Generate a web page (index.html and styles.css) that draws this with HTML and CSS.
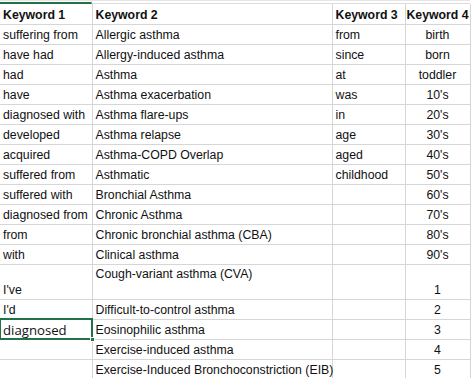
FILE: index.html
```html
<html>

<head>
    <title>Keywords</title>
    <link rel="stylesheet" href="styles.css">
</head>

<body>
    <div class="colhead">
        <div class="colhead_sel"></div>
        <div class="colhead_rest"></div>
    </div>
    <table class="sheet">
        <colgroup>
            <col class="c1">
            <col class="c2">
            <col class="c3">
            <col class="c4">
        </colgroup>
        <tr class="head">
            <td>Keyword 1</td>
            <td>Keyword 2</td>
            <td>Keyword 3</td>
            <td class="mid">Keyword 4</td>
        </tr>
        <tr><td>suffering from</td><td>Allergic asthma</td><td>from</td><td class="mid">birth</td></tr>
        <tr><td>have had</td><td>Allergy-induced asthma</td><td>since</td><td class="mid">born</td></tr>
        <tr><td>had</td><td>Asthma</td><td>at</td><td class="mid">toddler</td></tr>
        <tr><td>have</td><td>Asthma exacerbation</td><td>was</td><td class="mid">10's</td></tr>
        <tr><td>diagnosed with</td><td>Asthma flare-ups</td><td>in</td><td class="mid">20's</td></tr>
        <tr><td>developed</td><td>Asthma relapse</td><td>age</td><td class="mid">30's</td></tr>
        <tr><td>acquired</td><td>Asthma-COPD Overlap</td><td>aged</td><td class="mid">40's</td></tr>
        <tr><td>suffered from</td><td>Asthmatic</td><td>childhood</td><td class="mid">50's</td></tr>
        <tr><td>suffered with</td><td>Bronchial Asthma</td><td></td><td class="mid">60's</td></tr>
        <tr><td>diagnosed from</td><td>Chronic Asthma</td><td></td><td class="mid">70's</td></tr>
        <tr><td>from</td><td>Chronic bronchial asthma (CBA)</td><td></td><td class="mid">80's</td></tr>
        <tr><td>with</td><td>Clinical asthma</td><td></td><td class="mid">90's</td></tr>
        <tr class="tall"><td>I've</td><td class="top">Cough-variant asthma (CVA)</td><td></td><td class="mid">1</td></tr>
        <tr><td>I'd</td><td>Difficult-to-control asthma</td><td></td><td class="mid">2</td></tr>
        <tr><td class="selected">diagnosed<span class="handle"></span></td><td>Eosinophilic asthma</td><td></td><td class="mid">3</td></tr>
        <tr><td></td><td>Exercise-induced asthma</td><td></td><td class="mid">4</td></tr>
        <tr><td></td><td>Exercise-Induced Bronchoconstriction (EIB)</td><td></td><td class="mid">5</td></tr>
    </table>
</body>

</html>
```

FILE: styles.css
```css
body {
    margin: 0;
    background-color: #ffffff;
    font-family: "Liberation Sans", Arial, sans-serif;
    color: #111111;
}

.colhead {
    display: flex;
    width: 470px;
    height: 4px;
    border-top: 1px solid #e6e6e6;
    box-sizing: border-box;
}

.colhead_sel {
    width: 92px;
    height: 3px;
    border-bottom: 2px solid #217346;
    box-sizing: border-box;
    border-right: 1px solid #d4d4d4;
}

.colhead_rest {
    flex: 1;
    height: 3px;
    border-bottom: 1px solid #dcdcdc;
    box-sizing: border-box;
}

.sheet {
    border-collapse: collapse;
    table-layout: fixed;
    width: 470px;
    font-size: 12.3px;
}

.c1 { width: 92px; }
.c2 { width: 240px; }
.c3 { width: 73px; }
.c4 { width: 65px; }

.sheet tr {
    height: 20px;
}

.sheet td {
    border-bottom: 1px solid #d6d6d6;
    border-right: 1px solid #d6d6d6;
    padding: 0 3px 1px 3px;
    line-height: 15px;
    vertical-align: bottom;
    white-space: nowrap;
    overflow: visible;
}

.sheet tr.head td {
    font-weight: bold;
}

.sheet tr.tall {
    height: 35px;
}

.sheet td.top {
    vertical-align: top;
    padding-top: 2px;
}

.sheet td.mid {
    text-align: center;
    padding: 0 0 1px 0;
}

.sheet td.selected {
    position: relative;
    font-family: "Open Sans", "Noto Sans", sans-serif;
    font-size: 13.2px;
    color: #111111;
    outline: 2px solid #217346;
    outline-offset: -1px;
}

.handle {
    position: absolute;
    right: -3px;
    bottom: -3px;
    width: 5px;
    height: 5px;
    background-color: #217346;
    border: 1px solid #ffffff;
    box-sizing: border-box;
}
```
